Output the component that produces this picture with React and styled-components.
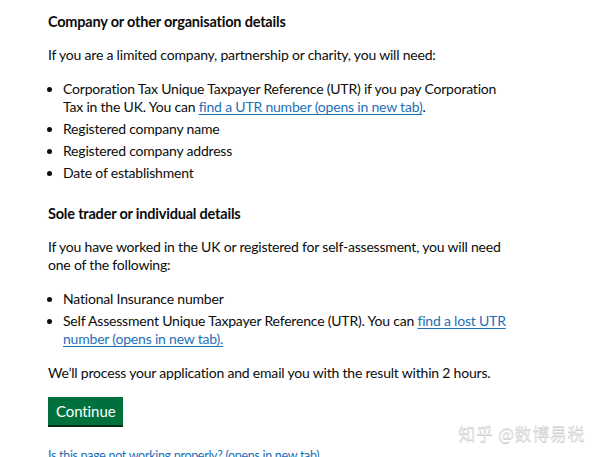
import React from "react";
import styled, { createGlobalStyle } from "styled-components";

const GlobalStyle = createGlobalStyle`
  html, body {
    margin: 0;
    padding: 0;
    background: #ffffff;
  }
  body {
    font-family: Lato, "Liberation Sans", sans-serif;
    color: #0b0c0c;
    letter-spacing: -0.2px;
    overflow: hidden;
  }
`;

const Page = styled.main`
  position: relative;
  width: 600px;
  height: 457px;
  padding: 12px 0 0 48px;
  box-sizing: border-box;
  overflow: hidden;
`;

const Heading = styled.h2`
  margin: 0 0 14px;
  font-size: 14.5px;
  line-height: 20px;
  font-weight: 700;
`;

const Para = styled.p`
  margin: 0 0 ${(p) => p.$gap ?? 16}px;
  font-size: 14px;
  line-height: 18px;
  width: 467px;
`;

const List = styled.ul`
  margin: 0 0 ${(p) => p.$gap ?? 22}px;
  padding: 0 0 0 15px;
  width: 452px;
  font-size: 14px;
  line-height: 18px;

  li {
    margin-bottom: 4px;
  }
`;

const Link = styled.a`
  color: #1d70b8;
  text-decoration: underline;
  text-underline-offset: 2px;
`;

const Button = styled.button`
  display: block;
  margin: 0 0 23px;
  padding: 5px 8px;
  background: #00703c;
  color: #ffffff;
  border: 0;
  border-radius: 0;
  box-shadow: 0 2px 0 #002d18;
  font-family: inherit;
  letter-spacing: -0.1px;
  font-size: 15px;
  line-height: 18px;
`;

const Footer = styled.a`
  display: block;
  color: #1d70b8;
  font-size: 12.5px;
  letter-spacing: -0.3px;
  line-height: 16px;
  text-decoration: underline;
`;

const Watermark = styled.div`
  position: absolute;
  right: 15px;
  top: 420px;
  font-family: "Noto Sans CJK SC", sans-serif;
  font-size: 17px;
  letter-spacing: 0.6px;
  color: #e6e6e6;
  text-shadow: 0 1px 0 #cccccc;
`;

export default function App() {
  return (
    <>
      <GlobalStyle />
      <Page>
        <Heading>Company or other organisation details</Heading>
        <Para>If you are a limited company, partnership or charity, you will need:</Para>
        <List>
          <li>
            Corporation Tax Unique Taxpayer Reference (UTR) if you pay Corporation Tax in the UK. You
            can <Link href="#">find a UTR number (opens in new tab)</Link>.
          </li>
          <li>Registered company name</li>
          <li>Registered company address</li>
          <li>Date of establishment</li>
        </List>
        <Heading>Sole trader or individual details</Heading>
        <Para>
          If you have worked in the UK or registered for self-assessment, you will need one of the
          following:
        </Para>
        <List $gap={16}>
          <li>National Insurance number</li>
          <li>
            Self Assessment Unique Taxpayer Reference (UTR). You can{" "}
            <Link href="#">find a lost UTR number (opens in new tab).</Link>
          </li>
        </List>
        <Para $gap={15}>We’ll process your application and email you with the result within 2 hours.</Para>
        <Button>Continue</Button>
        <Footer href="#">Is this page not working properly? (opens in new tab)</Footer>
        <Watermark>知乎 @数博易税</Watermark>
      </Page>
    </>
  );
}
